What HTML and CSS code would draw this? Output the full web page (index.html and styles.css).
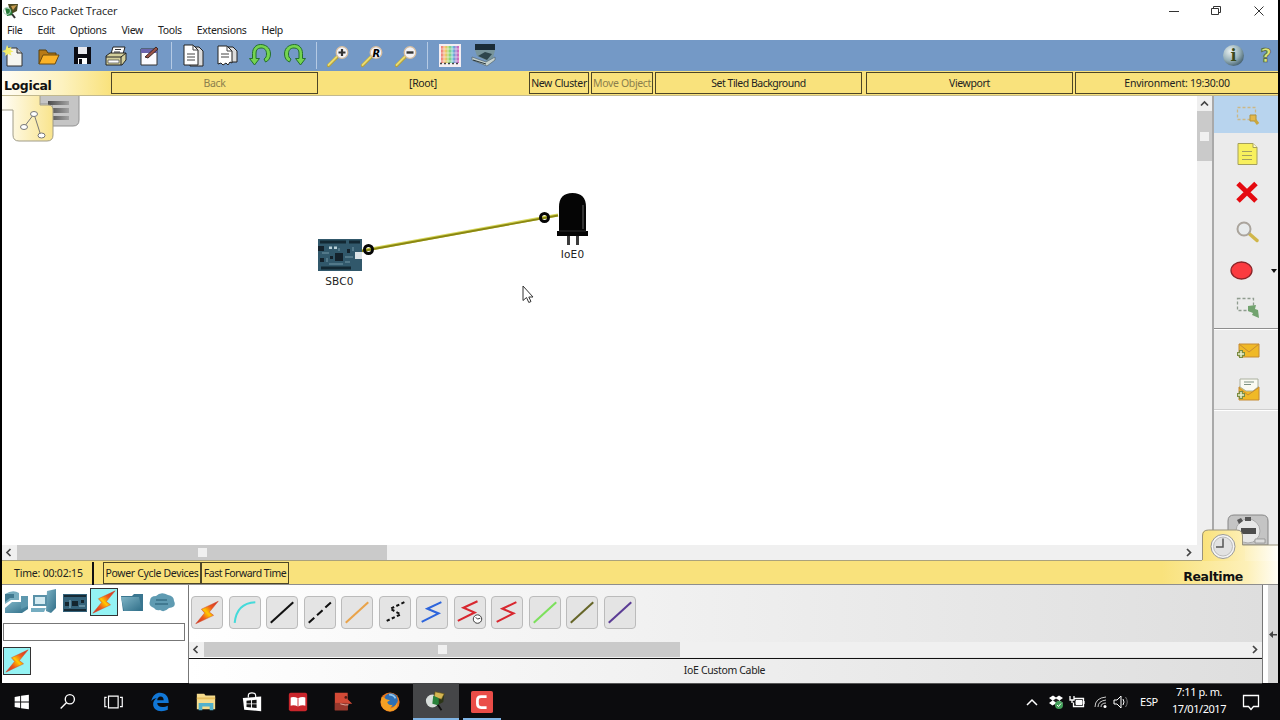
FILE: index.html
```html
<!DOCTYPE html>
<html lang="en">
<head>
  <meta charset="UTF-8">
  <title>Cisco Packet Tracer</title>
  <link rel="stylesheet" href="styles.css">
</head>
<body>
  <!-- shared shapes -->
  <svg width="0" height="0" class="defs">
    <defs>
      <linearGradient id="g-bolt" x1="0" y1="1" x2="1" y2="0">
        <stop offset="0" stop-color="#c8262c"/><stop offset=".3" stop-color="#ee5a1c"/><stop offset=".5" stop-color="#ffc800"/><stop offset=".7" stop-color="#ee5a1c"/><stop offset="1" stop-color="#c8262c"/>
      </linearGradient>
      <linearGradient id="g-teal" x1="0" y1="0" x2="1" y2="1">
        <stop offset="0" stop-color="#7fb4c6"/><stop offset="1" stop-color="#2f6e88"/>
      </linearGradient>
      <linearGradient id="g-tab" x1="0" y1="0" x2="1" y2="0">
        <stop offset="0" stop-color="#fffdf5"/><stop offset="1" stop-color="#f9e48c"/>
      </linearGradient>
      <linearGradient id="g-rt" x1="0" y1="0" x2="1" y2="0">
        <stop offset="0" stop-color="#fae27a"/><stop offset="1" stop-color="#fdf0b8"/>
      </linearGradient>
      <linearGradient id="g-strip" x1="0" y1="0" x2="1" y2="0">
        <stop offset="0" stop-color="#fdf0b8"/><stop offset="1" stop-color="#fffefa"/>
      </linearGradient>
      <linearGradient id="g-bars" x1="0" y1="0" x2="1" y2="0">
        <stop offset="0" stop-color="#4c4c4c"/><stop offset="1" stop-color="#a2a2a2"/>
      </linearGradient>
      <radialGradient id="g-info" cx=".35" cy=".3" r=".75">
        <stop offset="0" stop-color="#e8f0f0"/><stop offset=".6" stop-color="#96b0b8"/><stop offset="1" stop-color="#45606e"/>
      </radialGradient>
      <linearGradient id="g-colors" x1="0" y1="0" x2="1" y2="0">
        <stop offset="0" stop-color="#ef7884"/><stop offset=".25" stop-color="#f5c767"/><stop offset=".45" stop-color="#8edb67"/><stop offset=".65" stop-color="#63c6d5"/><stop offset=".8" stop-color="#8a81d5"/><stop offset="1" stop-color="#e266b8"/>
      </linearGradient>
    </defs>
    <symbol id="bolt" viewBox="0 0 26 26">
      <path d="M25 1 7 9.500l3.500 4L1 25l19-9-4.500-3.500Z" fill="url(#g-bolt)" stroke="#d4502c" stroke-width=".6"/>
    </symbol>
    <symbol id="lens" viewBox="0 0 26 26">
      <path d="M12 14 3.500 22.500" stroke="#b3a03c" stroke-width="3.200" stroke-linecap="round"/>
      <path d="M11.500 14 3.500 22" stroke="#e9dc70" stroke-width="1.800" stroke-linecap="round"/>
      <circle cx="17" cy="9.500" r="5.800" fill="#f3f3f6" stroke="#d9bfa0" stroke-width="1.300"/>
    </symbol>
    <symbol id="board" viewBox="0 0 44 32">
      <path d="M0 0h44v32H0z" fill="#31586b"/>
      <path d="M2 1.500h26v3H2zM31 1.500h11v3H31zM3 27.500h30v3H3z" fill="#132833"/>
      <path d="M17 14h8v8h-8zM29 10h3v4h-3zM12 17h3v3h-3zM2 19h4v4H2zM0 7h6v5H0z" fill="#14222c"/>
      <path d="M11 7.500h3v2.500h-3zM16 7.500h3v2.500h-3z" fill="#b8d0d8"/>
      <path d="M4 14h7M9 23v-4M21 12v-3M27 18h8M27 23h5M11 25h14M35 8v4" stroke="#85a9b8" stroke-width=".8"/>
    </symbol>
  </svg>

  <div class="window">
    <div class="titlebar">
      <svg class="logo" width="16" height="18" viewBox="0 0 16 18">
        <path d="M5 2h10l-1 7-6 3z" fill="#4c4a22"/><path d="M8 4l6-1-4 5z" fill="#c99c50"/><path d="M2 6l6 1 2 6-6 1z" fill="#267a38"/><path d="M9 12l3 4" stroke="#333" stroke-width="2"/><circle cx="4" cy="9" r="3.500" fill="none" stroke="#a8cfba"/>
      </svg>
      <span class="app-name">Cisco Packet Tracer</span>
      <svg class="controls" width="100" height="20" viewBox="0 0 100 20" fill="none" stroke="#333">
        <path d="M1 10.500h10M43.500 7.500h7v6h-7zM45.500 7.500v-2h7v6h-2M86.500 5.500l9 9M95.500 5.500l-9 9"/>
      </svg>
    </div>

    <div class="menu">
      <span>File</span><span>Edit</span><span>Options</span><span>View</span><span>Tools</span><span>Extensions</span><span>Help</span>
    </div>

    <div class="toolbar">
      <svg viewBox="0 0 26 26"><path d="M6 5h10l5 5v13H6z" fill="#f6f6f0" stroke="#333"/><path d="M16 5v5h5" fill="#ccc" stroke="#333"/><path d="M6 2l1.500 3 3-1-1 3 3 1.500-3 1 1 3-3.500-1.500L4 13l.5-3L1 8l3.500-1z" fill="#f5ef68"/></svg>
      <svg viewBox="0 0 26 26"><path d="M4 21V7h7l2 3h8v3" fill="#b97a16" stroke="#59400f"/><path d="M4 21 8 12h16l-4 9z" fill="#fbb227" stroke="#6b4a10"/></svg>
      <svg viewBox="0 0 26 26"><path d="M5 4h17v17H5z" fill="#0c0c14"/><path d="M9 4h9v7H9z" fill="#e8e8ee"/><path d="M9 15h9v6H9z" fill="#fff"/><path d="M10 16h3v5h-3z" fill="#0c0c14"/></svg>
      <svg viewBox="0 0 26 26"><path d="M8 11 10 4h12l-2 7" fill="#fff" stroke="#222"/><path d="M12 6.500h6M11 9h6" stroke="#333"/><path d="M3 13l4-3h16v7l-4 5H3z" fill="#d3cf9c" stroke="#222"/><path d="M3 14h15v8M18 14l5-4" fill="none" stroke="#222"/><path d="M5 17h11v3H5z" fill="#fff" stroke="#444" stroke-width=".7"/></svg>
      <svg viewBox="0 0 26 26"><path d="M4 6h16v16H4z" fill="#fbfbff" stroke="#333"/><path d="M4 6h16v4H4z" fill="#6a64ad"/><path d="M8 14 19 4l2 2-10 9z" fill="#9a5347" stroke="#3e2a27"/></svg>
      <i class="sep"></i>
      <svg viewBox="0 0 26 26"><path d="M10 4h9l4 4v15H10z" fill="#ddd" stroke="#222"/><path d="M4 2h9l5 5v15H4z" fill="#fff" stroke="#222"/><path d="M13 2v5h5M7 11h8M7 14h8M7 17h8" fill="none" stroke="#444"/></svg>
      <svg viewBox="0 0 26 26"><path d="M9 4h10l4 4v11H9z" fill="#ddd" stroke="#222"/><path d="M4 3h9l5 5v12l-2-1-2 3-2-2-3 2-2-2-3 1z" fill="#fff" stroke="#222"/><path d="M13 3v5h5M7 11h8M7 14h8" fill="none" stroke="#444"/></svg>
      <svg viewBox="0 0 26 26"><path d="M4.500 15.500V10.500C4.500 5 8 1.500 12.500 1.500S22.500 4 22.500 11c0 4-2 7-5 8l-1.500-3c2-1 2.500-3 2.500-5 0-4-2-6-5.500-6s-5 2-5 5v5.500h3.500L6.500 22 1.500 15.500z" fill="#74d450" stroke="#24702d"/></svg>
      <svg viewBox="0 0 26 26"><path d="M20.500 15.500V10.500C20.500 5 17 1.500 12.500 1.500S2.500 4 2.500 11c0 4 2 7 5 8l1.500-3c-2-1-2.500-3-2.500-5 0-4 2-6 5.500-6s5 2 5 5v5.500h-3.500l5 6.500 5-6.500z" fill="#74d450" stroke="#24702d"/></svg>
      <i class="sep"></i>
      <svg viewBox="0 0 26 26"><use href="#lens"/><path d="M13.500 9.500h7M17 6v7" stroke="#333" stroke-width="2.200"/></svg>
      <svg viewBox="0 0 26 26"><use href="#lens"/><text class="lens-letter" x="13.500" y="13.500">R</text></svg>
      <svg viewBox="0 0 26 26"><use href="#lens"/><path d="M13.500 9.500h7" stroke="#333" stroke-width="2.400"/></svg>
      <i class="sep"></i>
      <svg viewBox="0 0 26 26"><path d="M3 1h22v23H3z" fill="#f4eef2"/><path d="M5 3h18v17H5z" fill="url(#g-colors)"/><path d="M4 6h20M4 10h20M4 14h20M4 18h20M8 2v20M12 2v20M16 2v20M20 2v20" stroke="#f8f4f4" stroke-width=".6"/><path d="M4 20.500h20" stroke="#444" stroke-width="1.500" stroke-dasharray="2 2"/></svg>
      <svg viewBox="0 0 26 26"><path d="M5 1h20v6H5z" fill="#1b2c38"/><path d="M5 7h20l-2 8-6 3-10-5z" fill="#78959c"/><path d="M8 13l7-4 7 2-5 6z" fill="#2d454c"/><path d="M2 14l14 5 9-5v3l-8 6L2 17z" fill="#c6d2cf" stroke="#4c5d60" stroke-width=".6"/><path d="M3 17l13 4" stroke="#26343a"/></svg>
      <span class="fill"></span>
      <svg viewBox="0 0 26 26"><circle cx="13.500" cy="12.500" r="10.500" fill="url(#g-info)"/><text class="info-letter" x="10.500" y="18">i</text></svg>
      <svg viewBox="0 0 26 26"><text class="help-letter" x="7" y="20">?</text></svg>
    </div>

    <div class="navbar">
      <div class="mode">Logical</div>
      <div class="box back">Back</div>
      <div class="root">[Root]</div>
      <div class="box cluster">New Cluster</div>
      <div class="box move">Move Object</div>
      <div class="box tiled">Set Tiled Background</div>
      <div class="box viewport">Viewport</div>
      <div class="box env">Environment: 19:30:00</div>
    </div>

    <div class="main">
      <div class="work">
        <div class="work-top">
          <div class="canvas">
            <svg class="tabs" width="80" height="48" viewBox="0 0 80 48">
              <path d="M37-1h40v25q0 6-6 6H50V8H37z" fill="#c5c5c5" stroke="#929292"/>
              <path d="M46 5h21v4H46zM50 12h17v5H50zM50 20h17v4H50z" fill="url(#g-bars)"/>
              <path d="M0 14h11v25q0 6 6 6h28q6 0 6-6V14q0-5-5-5h-8V0H0z" fill="url(#g-tab)"/>
              <path d="M0 14h11v25q0 6 6 6h28q6 0 6-6V14q0-5-5-5h-8V0" fill="none" stroke="#a09c88"/>
              <g fill="#fff" stroke="#777"><path d="M22 31 32 18l7 22" fill="none"/><ellipse cx="32" cy="18" rx="3.500" ry="2.500"/><ellipse cx="22" cy="31" rx="3.500" ry="2.500"/><ellipse cx="39.500" cy="39.500" rx="3.500" ry="2.500"/></g>
            </svg>
            <svg class="link" width="260" height="60" viewBox="0 0 260 60">
              <path d="M42 46 240 10" stroke="#d6d65a" stroke-width="3"/>
              <path d="M42 46.500 240 10.500" stroke="#8a8712" stroke-width="1.800"/>
            </svg>
            <div class="device sbc">
              <svg width="44" height="32" viewBox="0 0 44 32"><use href="#board"/><path d="M37 13h7v7h-7z" fill="#dce4e7"/></svg>
              <span>SBC0</span>
            </div>
            <div class="device ioe">
              <svg width="32" height="54" viewBox="0 0 32 54">
                <path d="M10 42h3v11h-3zM19 42h3v11h-3z" fill="#3b3b3b"/>
                <path d="M2 39V15Q2 1 15.500 1T29 15v24h2v5H0v-5z" fill="#050505"/>
                <path d="M26 13v24" stroke="#444" stroke-width="1.500"/><path d="M2 39h27" stroke="#444" stroke-width=".7"/>
              </svg>
              <span>IoE0</span>
            </div>
            <i class="port port-sbc"></i>
            <i class="port port-ioe"></i>
            <svg class="cursor" width="13" height="19" viewBox="0 0 13 19"><path d="M1 1v14.500l3.500-3 2.300 5 2.200-1-2.200-4.500H11z" fill="#fff" stroke="#333"/></svg>
          </div>
          <div class="vscroll">
            <svg width="15" height="15" viewBox="0 0 15 15"><path d="M4 9.500 7.500 6 11 9.500" fill="none" stroke="#444" stroke-width="1.700"/></svg>
            <div class="thumb"><i></i></div>
          </div>
        </div>
        <div class="hscroll">
          <svg width="15" height="15" viewBox="0 0 15 15"><path d="M8.500 4 5 7.500 8.500 11" fill="none" stroke="#444" stroke-width="1.700"/></svg>
          <div class="thumb"><i></i></div>
          <span class="fill"></span>
          <svg width="15" height="15" viewBox="0 0 15 15"><path d="M4 4l3.500 3.500L4 11" fill="none" stroke="#444" stroke-width="1.700"/></svg>
        </div>
      </div>

      <div class="tools">
        <div class="tool selected"><svg viewBox="0 0 26 26"><path d="M3.500 5.500h18v12h-18z" fill="none" stroke="#cbb887" stroke-width="1.300" stroke-dasharray="3 2"/><path d="M16 13h6v6h-6z" fill="#e4b849" stroke="#b1923d"/><path d="M21 18l3 4" stroke="#c9a63d" stroke-width="3"/></svg></div>
        <div class="tool"><svg viewBox="0 0 26 26"><path d="M4 2.500h15l4 4v17H4z" fill="#f8f05e" stroke="#a5a05b"/><path d="M19 2.500v4h4" fill="#fffbd0" stroke="#a5a05b"/><path d="M8 10.500h10M8 14.500h10M8 18.500h10" stroke="#a4a060" stroke-width="1.200"/></svg></div>
        <div class="tool"><svg viewBox="0 0 26 26"><path d="M4 4.500 22 22M22 4.500 4 22" stroke="#e50a10" stroke-width="5"/></svg></div>
        <div class="tool"><svg viewBox="0 0 26 26"><path d="M15 15.500 23 22.500" stroke="#d0b64a" stroke-width="3.500" stroke-linecap="round"/><circle cx="10" cy="11" r="6.500" fill="#e8ebec" stroke="#aaa49c" stroke-width="2"/></svg></div>
        <div class="tool"><svg width="42" viewBox="0 0 42 26"><ellipse cx="15.500" cy="13.500" rx="10.500" ry="8.500" fill="#fb3b40" stroke="#8a2428" stroke-width="1.300"/><path d="M45 12h6l-3 4z" fill="#111"/></svg></div>
        <div class="tool"><svg viewBox="0 0 26 26"><path d="M3.500 3.500h16v12h-16z" fill="none" stroke="#8f9c8f" stroke-width="1.300" stroke-dasharray="3 2"/><path d="M14 11l8-1-1 4 3 1 1 8-7-3 1-2-5-2z" fill="#72a36f"/></svg></div>
        <div class="rule"></div>
        <div class="tool"><svg viewBox="0 0 26 26"><path d="M5 6h20v13H5z" fill="#f0b927" stroke="#c58b35"/><path d="M5 6l10 8L25 6" fill="none" stroke="#c58b35"/><path d="M3 16h8M7 12v8" stroke="#7a8c42" stroke-width="4"/><path d="M4 16h6M7 13v6" stroke="#e9efcf" stroke-width="1.500"/></svg></div>
        <div class="tool"><svg viewBox="0 0 26 26"><path d="M5 11h20v13H5z" fill="#f0b927" stroke="#c58b35"/><path d="M6 3h18v8l-5 4h-7l-6-4z" fill="#fafaf3" stroke="#aab09f"/><path d="M10 6h10M10 8.500h7" stroke="#7c9182"/><path d="M5 12l9 7 10-7" fill="none" stroke="#c58b35"/><path d="M3 19h8M7 15v8" stroke="#7a8c42" stroke-width="4"/><path d="M4 19h6M7 16v6" stroke="#e9efcf" stroke-width="1.500"/></svg></div>
        <div class="rule light"></div>
      </div>
    </div>

    <div class="status">
      <div class="time">Time: 00:02:15</div>
      <div class="box cycle">Power Cycle Devices</div>
      <div class="box forward">Fast Forward Time</div>
      <span class="fill"></span>
      <div class="mode realtime">Realtime</div>
      <svg class="rt-tabs" width="78" height="48" viewBox="0 0 78 48">
        <path d="M28 31V7q0-6 6-6h28q6 0 6 6v24z" fill="#c4c4c4" stroke="#868686"/>
        <circle cx="48" cy="17" r="12" fill="#e6e6e6" stroke="#aaa"/><path d="M45 3h6v4h-6zM37 6l4-2 2 3-4 3z" fill="#555"/><path d="M41 14h15v6H41z" fill="#4c4c4c"/><path d="M55 25h10v4H55z" fill="#ddd" stroke="#888" stroke-width=".7"/>
        <path d="M42 31h36v16H42z" fill="url(#g-strip)"/>
        <path d="M2 47V21q0-5 6-5h28q6 0 6 6v9h3v16z" fill="url(#g-rt)"/>
        <path d="M2.500 46V22q0-6 6-6h28q6 0 6 6v9H78" fill="none" stroke="#99937d"/>
        <circle cx="23" cy="32.500" r="12" fill="#f4f4f4" stroke="#999"/><circle cx="23" cy="32.500" r="9.500" fill="#e2e2e2" stroke="#bbb"/><path d="M23 24.500V33h-7" fill="none" stroke="#555" stroke-width="1.500"/>
      </svg>
    </div>

    <div class="lower">
      <div class="categories">
        <div class="cat-icons">
          <svg viewBox="0 0 28 28"><path d="M3 6q8-5 14-1v7H9L3 16z" fill="#77adbf"/><path d="M3 6h9v4H8l-5 4z" fill="#40798f"/><path d="M3 20l7-6h16v7l-6 4H3z" fill="url(#g-teal)"/><path d="M19 8h7v10l-7 3z" fill="#5d98ae"/></svg>
          <svg viewBox="0 0 28 28"><path d="M16 3l9-2v19l-5 5-5-2z" fill="url(#g-teal)"/><path d="M2 7h14v11H2z" fill="#5991a8"/><path d="M4 9h10v7H4z" fill="#d3eaf1"/><path d="M0 20h15l-2 4H0z" fill="#75adc1"/></svg>
          <svg viewBox="0 0 28 28"><path d="M2 6h24v18H2z" fill="#34627a"/><path d="M3 8h22M3 22h22" stroke="#162a35" stroke-width="2"/><path d="M11 13h6v5h-6zM20 12h3v3h-3zM4 14h4v4H4z" fill="#14252f"/><path d="M9 12v8M18 18h6" stroke="#8fb8c8"/></svg>
          <svg class="picked" viewBox="0 0 28 28"><use href="#bolt" x="1" y="1" width="26" height="26"/></svg>
          <svg viewBox="0 0 28 28"><path d="M2 8h11l2-2h9v17H4z" fill="#3a7690"/><path d="M2 9h18l3 14H5z" fill="url(#g-teal)"/></svg>
          <svg viewBox="0 0 28 28"><path d="M6 20q-6-2-4-7 0-5 6-5 5-5 12-1 6 1 6 6 3 6-5 7-5 5-9 2-4 1-6-2z" fill="#5f9bb2"/><path d="M8 12h11M7 16h13" stroke="#397087" stroke-width="1.500"/></svg>
        </div>
        <div class="search"></div>
        <svg class="picked" viewBox="0 0 28 28"><use href="#bolt" x="1" y="1" width="26" height="26"/></svg>
      </div>

      <div class="connections">
        <div class="cables">
          <svg viewBox="0 0 32 32"><use href="#bolt" x="3" y="3" width="26" height="26"/></svg>
          <svg viewBox="0 0 32 32"><path d="M5 27Q7 6 27 5" stroke="#45dada"/></svg>
          <svg viewBox="0 0 32 32"><path d="M4 27 28 5" stroke="#111"/></svg>
          <svg viewBox="0 0 32 32"><path d="M4 27 28 5" stroke="#111" stroke-dasharray="8 4"/></svg>
          <svg viewBox="0 0 32 32"><path d="M4 27 28 5" stroke="#e9a34a"/></svg>
          <svg viewBox="0 0 32 32"><path d="M26 5 11 12l11 6-17 8" stroke="#111" stroke-dasharray="3.500 2.500"/></svg>
          <svg viewBox="0 0 32 32"><path d="M26 5 11 12l12 5-18 9" stroke="#2d65dc"/></svg>
          <svg viewBox="0 0 32 32"><path d="M24 4 9 11l12 5-18 9" stroke="#d82830"/><circle cx="24" cy="23" r="4.500" fill="#fff" stroke="#333" stroke-width="1"/><path d="M22 21l2 2 3-1" stroke="#333" stroke-width="1"/></svg>
          <svg viewBox="0 0 32 32"><path d="M26 5 11 12l12 5-18 9" stroke="#d82830"/></svg>
          <svg viewBox="0 0 32 32"><path d="M4 27 28 5" stroke="#7ce05c"/></svg>
          <svg viewBox="0 0 32 32"><path d="M4 27 28 5" stroke="#666629"/></svg>
          <svg viewBox="0 0 32 32"><path d="M4 27 28 5" stroke="#5b3c95"/></svg>
        </div>
        <div class="hscroll small">
          <svg width="15" height="15" viewBox="0 0 15 15"><path d="M8.500 4 5 7.500 8.500 11" fill="none" stroke="#444" stroke-width="1.700"/></svg>
          <div class="thumb"><i></i></div>
          <span class="fill"></span>
          <svg width="15" height="15" viewBox="0 0 15 15"><path d="M6 4l3.500 3.500L6 11" fill="none" stroke="#444" stroke-width="1.700"/></svg>
        </div>
        <div class="caption">IoE Custom Cable</div>
      </div>
      <div class="handle"><svg width="9" height="9" viewBox="0 0 9 9"><path d="M1 4.500 5 1v7zM5 4h4v1.500H5z" fill="#444"/></svg></div>
    </div>
  </div>

  <div class="taskbar">
    <div class="task"><svg viewBox="0 0 24 24"><path d="M4 6.500l6-1v6H4zM11 5.300l8.500-1.300v7.500H11zM4 12.500h6v6l-6-1zM11 12.500h8.500V20L11 18.800z" fill="#fff"/></svg></div>
    <div class="task"><svg viewBox="0 0 24 24" fill="none" stroke="#fff" stroke-width="1.500"><circle cx="14" cy="9" r="5"/><path d="M10.500 12.500 4 19"/></svg></div>
    <div class="task"><svg viewBox="0 0 24 24" fill="none" stroke="#fff" stroke-width="1.300"><path d="M6 5.500h10.500v13H6zM4 7H2v10h2M18.500 7H21v10h-2.500"/></svg></div>
    <div class="task"><svg viewBox="0 0 24 24"><path d="M2.500 11C4 4.500 8 2 12 2c6 0 9.500 4 9.500 11H9c0 3 2.500 4.500 5.500 4.500 2.500 0 4.500-.7 6-1.500v4.500C18.500 21.500 16 22 13.500 22 8 22 4.500 19 4.500 14.500c0-3 1.500-5 4-6.500-2.500.2-4.500 1.300-6 3zM9 10h7c0-2.500-1-4-3.500-4C10.500 6 9 8 9 10z" fill="#1177d6"/></svg></div>
    <div class="task"><svg viewBox="0 0 24 24"><path d="M2 3h8l1.500 2H22v15H2z" fill="#f6dc8c"/><path d="M2 7h20v2H2z" fill="#e7c05f"/><path d="M4 13h16v8h-4v-4H8v4H4z" fill="#52b1cc"/></svg></div>
    <div class="task"><svg viewBox="0 0 24 24"><path d="M8 7V5q0-3 4-3t4 3v2" fill="none" stroke="#fff" stroke-width="1.300"/><path d="M2 7.500 22 6v16L3.500 20.500z" fill="#fff"/><path d="M6 10.500l5-.5v3.500H6zM12 10l5-.5v4h-5zM6 14.500h5V18l-5-.5zM12 14.500h5v4l-5-.5z" fill="#111"/></svg></div>
    <div class="task"><svg viewBox="0 0 24 24"><rect x="2" y="2" width="20" height="20" rx="2" fill="#c9252b"/><path d="M4 7q4-1 8 1 4-2 8-1v9q-4-1-8 1-4-2-8-1z" fill="#fff"/><path d="M12 8v9" stroke="#c9252b"/></svg></div>
    <div class="task"><svg viewBox="0 0 24 24"><path d="M2 2h14v7l5 5h-5v7H2z" fill="#d34a36"/><path d="M2 13h14v8H2z" fill="#97382d"/><circle cx="14" cy="7" r="1.500" fill="#531a15"/><path d="M8 14q6 2 9 1" stroke="#e8b5a9" fill="none"/></svg></div>
    <div class="task"><svg viewBox="0 0 24 24"><circle cx="12" cy="12" r="10.500" fill="#e9761c"/><circle cx="13" cy="10" r="7.500" fill="#2d6fb5"/><path d="M3 6q3 1 5 3l4 1-3 2q1 4 6 3l-3 4q5 0 8-7 1 10-8 10T2 12z" fill="#f4a024"/><path d="M11 4q5 0 7 4" stroke="#8fc5ee" stroke-width="2" fill="none"/></svg></div>
    <div class="task active"><svg viewBox="0 0 24 24"><circle cx="8" cy="12" r="7" fill="#d8dedb"/><path d="M10 3l11 1-1 9-7 4z" fill="#2c3518"/><path d="M11 2l10 2-3 6-8-2z" fill="#d5b652" stroke="#64531b" stroke-width=".7"/><path d="M9 6l-1 9 7 2V9z" fill="#28813a"/><path d="M14 16l4 6" stroke="#111" stroke-width="2"/></svg></div>
    <div class="task open"><svg viewBox="0 0 24 24"><rect x="0" y="0" width="24" height="24" rx="2" fill="#ea4d48"/><path d="M17 6h-6q-4 0-4 4v4q0 4 4 4h6" fill="none" stroke="#fff" stroke-width="3"/></svg></div>
    <span class="fill"></span>
    <svg class="tray" width="106" height="20" viewBox="0 0 106 20" fill="none" stroke="#fff">
      <path d="M2 13l5-5 5 5" stroke-width="1.500"/>
      <path d="M24 6l4-2.500 3 2 3-2L38 6l-3.500 2.500L38 11l-3.500 2.500-3.500-2-3.500 2L24 11l3.500-2.500z" fill="#fff" stroke="none"/><path d="M28 8.500 31 6.500l3.500 2-3.500 2z" fill="#222" stroke="none"/><circle cx="34" cy="13" r="4" fill="#44a05a" stroke="none"/><path d="M32 13l1.500 1.500 2.500-3"/>
      <path d="M49.500 6.500h9v8h-10v-4M59 9v3M45 4v4h4V4M47 8v3" stroke-width="1.300"/><path d="M51 8.500h6v4h-6z" fill="#fff"/>
      <path d="M70 15q0-9 11-10M73 15q0-6 8-7M76 15q0-4 5-4" stroke="#ccc"/><circle cx="80" cy="14.500" r="1.500" fill="#fff" stroke="none"/>
      <path d="M89 8h3l4-4v12l-4-4h-3z"/><path d="M98 7q2 3 0 6"/><path d="M100.500 5q3.500 5 0 10" stroke="#777"/>
    </svg>
    <span class="lang">ESP</span>
    <div class="clock"><span>7:11 p. m.</span><span>17/01/2017</span></div>
    <svg class="notif" width="18" height="18" viewBox="0 0 18 18"><path d="M1.500 2.500h15v11h-5l-2.500 3-2.500-3h-5z" fill="none" stroke="#fff" stroke-width="1.300"/></svg>
  </div>
</body>
</html>
```

FILE: styles.css
```css
* {
  box-sizing: border-box;
}

body {
  margin: 0;
  width: 1280px;
  height: 720px;
  overflow: hidden;
  background: #000;
  font-family: "Noto Sans", "Open Sans", sans-serif;
  font-size: 10.5px;
  letter-spacing: -0.35px;
  color: #222;
}

svg {
  display: block;
  flex: none;
}

.defs {
  position: absolute;
}

.fill {
  flex: 1;
}

.window {
  margin: 0 2px;
  height: 683px;
  background: #fff;
}

/* title and menu */
.titlebar {
  display: flex;
  align-items: center;
  height: 21px;
}

.logo {
  margin-left: 1px;
}

.app-name {
  margin-left: 3px;
  font-family: "Open Sans", sans-serif;
  font-size: 11px;
  letter-spacing: -0.2px;
  flex: 1;
}

.controls {
  margin-right: 10px;
}

.menu {
  display: flex;
  gap: 15px;
  height: 19px;
  padding-left: 5px;
  line-height: 18px;
}

/* blue toolbar */
.toolbar {
  display: flex;
  align-items: center;
  gap: 8px;
  height: 31px;
  background: #7499c6;
}

.toolbar svg {
  width: 26px;
  height: 26px;
}

.toolbar svg:first-child {
  margin-left: -1px;
}

.toolbar svg:last-child {
  width: 24px;
}

.sep {
  width: 1px;
  height: 27px;
  background: #b5cae4;
}

.lens-letter {
  font: italic bold 10px "DejaVu Sans", sans-serif;
}

.info-letter {
  font: bold 16px "DejaVu Serif", serif;
  fill: #3b4c1c;
}

.help-letter {
  font: bold 21px "DejaVu Sans", sans-serif;
  fill: #dce67a;
  stroke: #4b5632;
  stroke-width: 0.8px;
}

/* yellow navigation bar */
.navbar {
  display: flex;
  height: 25px;
  padding: 1px 0 2px;
  background: #f9e27c;
  border-bottom: 1px solid #c2b98f;
}

.box {
  border: 1px solid #4c4526;
  height: 22px;
  line-height: 20px;
  text-align: center;
  white-space: nowrap;
  background: #f9e27c;
}

.mode {
  font-family: "DejaVu Sans", sans-serif;
  font-weight: bold;
  font-size: 12.5px;
  color: #111;
}

.navbar .mode {
  width: 109px;
  margin: -1px 0 -2px;
  padding: 7px 0 0 2px;
  background: linear-gradient(90deg, #fffdf5, #fdf2c0 55%, #f9e27c);
}

.back {
  width: 207px;
  color: #8b7f4d;
}

.root {
  width: 210px;
  line-height: 22px;
  text-align: center;
}

.cluster {
  width: 60px;
  margin-left: 1px;
}

.move {
  width: 62px;
  margin-left: 2px;
  color: #8b7f4d;
}

.tiled {
  width: 207px;
  margin-left: 2px;
  letter-spacing: -0.5px;
}

.viewport {
  width: 207px;
  margin-left: 4px;
}

.env {
  flex: 1;
  margin-left: 2px;
  border-right: 0;
  letter-spacing: -0.25px;
}

/* workspace */
.main {
  display: flex;
  height: 464px;
}

.work {
  width: 1210px;
}

.work-top {
  display: flex;
  height: 449px;
}

.canvas {
  position: relative;
  width: 1195px;
  background: #fff;
}

.tabs {
  position: absolute;
  left: 0;
  top: 0;
}

.link {
  position: absolute;
  left: 316px;
  top: 109px;
}

.device {
  position: absolute;
  display: flex;
  flex-direction: column;
  align-items: center;
  font-family: "DejaVu Sans", sans-serif;
  font-size: 10.5px;
  letter-spacing: 0.2px;
  line-height: 14px;
}

.sbc {
  left: 315.5px;
  top: 143px;
}

.sbc span {
  margin-top: 3px;
}

.ioe {
  left: 554.5px;
  top: 96px;
}

.ioe span {
  margin-top: 1px;
}

.port {
  position: absolute;
  width: 11px;
  height: 11px;
  border: 3px solid #050505;
  border-radius: 50%;
}

.port-sbc {
  left: 361px;
  top: 148px;
}

.port-ioe {
  left: 537px;
  top: 116px;
}

.cursor {
  position: absolute;
  left: 520px;
  top: 189px;
}

.vscroll {
  width: 15px;
  background: #efefef;
}

.thumb {
  display: flex;
  align-items: center;
  justify-content: center;
  background: #cacaca;
}

.thumb i {
  width: 9px;
  height: 9px;
  background: #f0f0f0;
}

.vscroll .thumb {
  height: 50px;
}

.hscroll {
  display: flex;
  height: 15px;
  padding-right: 14px;
  background: #f0f0f0;
}

.hscroll .thumb {
  width: 370px;
}

.tools {
  width: 66px;
  border-left: 2px solid #a9a9a9;
  background: #ebebeb;
}

.tool {
  display: flex;
  justify-content: center;
  align-items: center;
  height: 38.6px;
  padding-left: 2px;
}

.tool svg {
  width: 26px;
  height: 26px;
  overflow: visible;
}

.tool svg[width="42"] {
  width: 42px;
}

.selected {
  height: 37px;
  margin-bottom: 1.6px;
  background: #b8d4ee;
}

.rule {
  height: 2px;
  margin-bottom: 2px;
  border-top: 1px solid #8e8e8e;
  background: #fff;
}

.light {
  border-color: #cfcfcf;
}

/* status bar */
.status {
  position: relative;
  display: flex;
  height: 25px;
  padding-top: 1px;
  background: linear-gradient(90deg, #f9e27c 0 1160px, #fdf0b8 1245px, #fffdf5);
  border-top: 1px solid #aaa27c;
  border-bottom: 1px solid #8e8e8e;
}

.time {
  width: 92px;
  height: 23px;
  padding-left: 12px;
  line-height: 22px;
  letter-spacing: -0.2px;
  border-right: 2px solid #111;
}

.cycle {
  width: 98px;
  margin-left: 9px;
}

.forward {
  width: 88px;
  margin-left: 0;
  letter-spacing: -0.5px;
}

.realtime {
  padding: 7px 35px 0 0;
  line-height: 15px;
}

.rt-tabs {
  position: absolute;
  right: 0;
  top: -47px;
}

/* device and cable pickers */
.lower {
  display: flex;
  height: 98px;
}

.categories {
  width: 186px;
  padding: 3px 0;
  background: #fff;
}

.cat-icons {
  display: flex;
  gap: 1.3px;
}

.categories svg {
  width: 28px;
  height: 28px;
}

.picked {
  background: #94f3f4;
  border: 1px solid #333;
}

.search {
  width: 182px;
  height: 18px;
  margin: 7px 0 6px 1px;
  border: 1px solid #777;
}

.search + .picked {
  margin-left: 1px;
}

.connections {
  width: 1075px;
  border-left: 1px solid #777;
  border-right: 1px solid #777;
  background: linear-gradient(90deg, #fff, #dedede);
}

.cables {
  display: flex;
  gap: 5.55px;
  height: 57px;
  padding: 11px 0 0 2px;
}

.cables svg {
  width: 32px;
  height: 33px;
  border: 1px solid #bbb;
  border-radius: 4px;
  background: #e4e4e4;
  fill: none;
  stroke-width: 2.2;
}

.small {
  height: 15px;
  padding-right: 0;
}

.small .thumb {
  width: 476px;
}

.caption {
  height: 26px;
  margin-top: 1px;
  border-top: 1px solid #111;
  border-bottom: 1px solid #555;
  line-height: 23px;
  text-align: center;
  padding-right: 2px;
}

.handle {
  display: flex;
  align-items: center;
  flex: 1;
  border-left: 5px solid #fff;
  background: #d8d8d8;
}

/* taskbar */
.taskbar {
  display: flex;
  align-items: center;
  height: 37px;
  background: #0c0c0e;
  color: #fff;
}

.task {
  display: flex;
  justify-content: center;
  align-items: center;
  width: 46px;
  height: 37px;
}

.task:first-child {
  margin-left: -1px;
}

.task svg {
  width: 22px;
  height: 22px;
}

.active {
  background: #454648;
  border-bottom: 2px solid #80b5e5;
}

.open {
  background: linear-gradient(#80b5e5, #80b5e5) 4px bottom / 38px 2px no-repeat;
}

.lang {
  width: 36px;
  font-size: 11px;
  text-align: center;
}

.clock {
  display: flex;
  flex-direction: column;
  width: 64px;
  margin-top: -3px;
  font-size: 11px;
  letter-spacing: -0.45px;
  line-height: 17px;
  text-align: center;
}

.notif {
  margin: 0 20px 0 11px;
}
```
